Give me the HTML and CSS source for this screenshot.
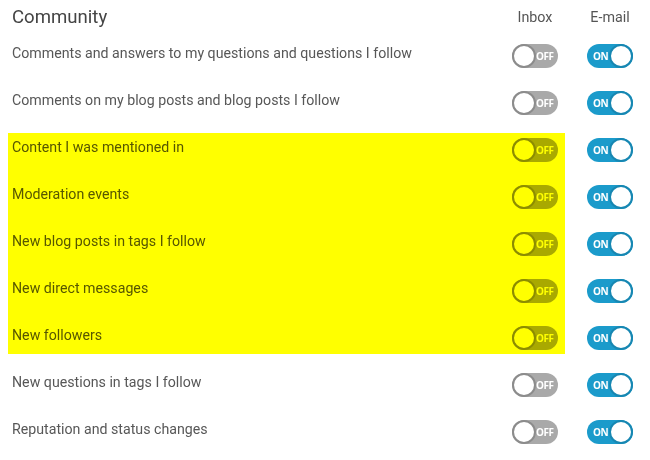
FILE: index.html
```html
<!DOCTYPE html>
<html>
<head>
<meta charset="utf-8">
<link rel="stylesheet" href="styles.css">
</head>
<body>
<div class="panel">
  <div class="head">
    <div class="title">Community</div>
    <div class="colhead">Inbox</div>
    <div class="colhead">E-mail</div>
  </div>
  <div class="row"><div class="label">Comments and answers to my questions and questions I follow</div><span class="tog off"><span class="knob"></span><span class="txt">OFF</span></span><span class="tog on"><span class="txt">ON</span><span class="knob"></span></span></div>
  <div class="row"><div class="label">Comments on my blog posts and blog posts I follow</div><span class="tog off"><span class="knob"></span><span class="txt">OFF</span></span><span class="tog on"><span class="txt">ON</span><span class="knob"></span></span></div>
  <div class="row"><div class="label">Content I was mentioned in</div><span class="tog off"><span class="knob"></span><span class="txt">OFF</span></span><span class="tog on"><span class="txt">ON</span><span class="knob"></span></span></div>
  <div class="row"><div class="label">Moderation events</div><span class="tog off"><span class="knob"></span><span class="txt">OFF</span></span><span class="tog on"><span class="txt">ON</span><span class="knob"></span></span></div>
  <div class="row"><div class="label">New blog posts in tags I follow</div><span class="tog off"><span class="knob"></span><span class="txt">OFF</span></span><span class="tog on"><span class="txt">ON</span><span class="knob"></span></span></div>
  <div class="row"><div class="label">New direct messages</div><span class="tog off"><span class="knob"></span><span class="txt">OFF</span></span><span class="tog on"><span class="txt">ON</span><span class="knob"></span></span></div>
  <div class="row"><div class="label">New followers</div><span class="tog off"><span class="knob"></span><span class="txt">OFF</span></span><span class="tog on"><span class="txt">ON</span><span class="knob"></span></span></div>
  <div class="row"><div class="label">New questions in tags I follow</div><span class="tog off"><span class="knob"></span><span class="txt">OFF</span></span><span class="tog on"><span class="txt">ON</span><span class="knob"></span></span></div>
  <div class="row"><div class="label">Reputation and status changes</div><span class="tog off"><span class="knob"></span><span class="txt">OFF</span></span><span class="tog on"><span class="txt">ON</span><span class="knob"></span></span></div>
  <div class="highlight"></div>
</div>
</body>
</html>
```
FILE: styles.css
```css
html, body {
  margin: 0;
  padding: 0;
  background: #fff;
}
body {
  font-family: Roboto, "Liberation Sans", sans-serif;
  color: #555;
}
.panel {
  position: relative;
  width: 650px;
  height: 460px;
  padding: 0 17px 0 12px;
  box-sizing: border-box;
}
.head, .row {
  display: grid;
  grid-template-columns: 1fr 46px 46px;
  column-gap: 29px;
  align-items: center;
}
.head {
  height: 32px;
  padding-top: 2px;
  box-sizing: border-box;
}
.title {
  font-size: 18.6px;
  color: #444;
}
.colhead {
  font-size: 14.3px;
  text-align: center;
  color: #555;
  white-space: nowrap;
  justify-self: center;
}
.row {
  height: 47px;
}
.label {
  font-size: 14.2px;
  color: #575757;
  margin-top: -5px;
}
.tog {
  position: relative;
  display: flex;
  align-items: center;
  width: 46px;
  height: 24px;
  border-radius: 12px;
  box-sizing: border-box;
  font-family: "Open Sans", Roboto, sans-serif;
  font-weight: 700;
  font-size: 10px;
  color: #fff;
  letter-spacing: -0.5px;
}
.tog .knob {
  width: 24px;
  height: 24px;
  border-radius: 50%;
  background: #fff;
  box-sizing: border-box;
  flex: none;
}
.tog.off {
  background: #a9a9a9;
}
.tog.off .knob {
  border: 2px solid #8c8c8c;
}
.tog.off .txt {
  margin-left: 0;
}
.tog.on {
  background: #1b9bcb;
  justify-content: space-between;
}
.tog.on .knob {
  border: 2px solid #1787b2;
}
.tog.on .txt {
  margin-left: 6px;
}
.highlight {
  position: absolute;
  left: 8px;
  top: 133px;
  width: 557px;
  height: 221px;
  background: #ffff00;
  mix-blend-mode: multiply;
}
```
